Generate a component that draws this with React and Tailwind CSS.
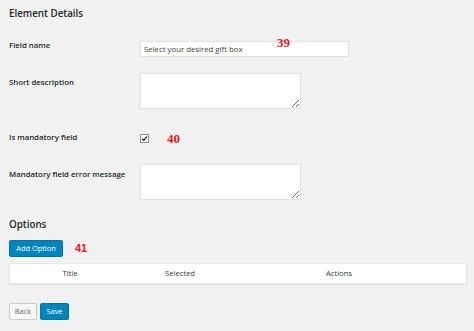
import React, { useState } from 'react';

const Marker = ({ children, className }) => (
  <span
    className={`text-[#e8141b] font-bold text-[13px] leading-none ${className}`}
    style={{ fontFamily: '"Liberation Serif", serif' }}
  >
    {children}
  </span>
);

function App() {
  const [fieldName, setFieldName] = useState('Select your desired gift box');
  const [mandatory, setMandatory] = useState(true);

  return (
    <div
      className="w-[474px] h-[331px] bg-[#f1f1f1] text-[#23282d] overflow-hidden"
      style={{ fontFamily: '"Open Sans", "Noto Sans", sans-serif' }}
    >
      <div className="px-[9px] pt-[6px]">
        <h2 className="text-[9.8px] font-semibold leading-[16px]">Element Details</h2>

        <div className="mt-[15px] flex items-center h-[17px]">
          <label className="w-[131px] text-[7.8px] font-semibold">Field name</label>
          <div className="relative">
            <input
              value={fieldName}
              onChange={(e) => setFieldName(e.target.value)}
              className="w-[209px] h-[16px] bg-white border border-[#e0e0e0] px-[3px] text-[7.8px] text-[#444] outline-none"
            />
            <Marker className="absolute left-[137px] top-[2px]">39</Marker>
          </div>
        </div>

        <div className="mt-[19px] flex items-start">
          <label className="w-[131px] text-[7.8px] font-semibold mt-[4px]">Short description</label>
          <textarea className="w-[161px] h-[36px] bg-white border border-[#e0e0e0] resize-y outline-none text-[8px] p-[2px]" />
        </div>

        <div className="mt-[24px] flex items-center h-[10px]">
          <label className="w-[131px] text-[7.8px] font-semibold">Is mandatory field</label>
          <button
            onClick={() => setMandatory(!mandatory)}
            className="w-[9px] h-[9px] bg-white border border-[#8c8f94] flex items-center justify-center"
          >
            {mandatory && (
              <svg viewBox="0 0 10 10" className="w-[7px] h-[7px]">
                <path d="M1.5 5.2 L4 7.6 L8.6 2" fill="none" stroke="#1e1e1e" strokeWidth="1.8" />
              </svg>
            )}
          </button>
          <Marker className="ml-[18px]">40</Marker>
        </div>

        <div className="mt-[21px] flex items-start">
          <label className="w-[131px] text-[7.8px] font-semibold mt-[5px]">Mandatory field error message</label>
          <textarea className="w-[161px] h-[36px] bg-white border border-[#e0e0e0] resize-y outline-none text-[8px] p-[2px]" />
        </div>

        <h2 className="mt-[17px] text-[9.8px] font-semibold leading-[16px]">Options</h2>

        <div className="mt-[7px] flex items-center">
          <button className="w-[54px] h-[17px] bg-[#0085ba] border border-[#0073aa] rounded-[2px] text-white text-[7.4px] leading-none">
            Add Option
          </button>
          <span
            className="ml-[12px] text-[#e8141b] font-bold text-[11px] leading-none"
            style={{ fontFamily: '"Liberation Sans", sans-serif' }}
          >
            41
          </span>
        </div>

        <div className="mt-[6px] w-[458px] h-[21px] bg-white shadow-[0_1px_1px_rgba(0,0,0,0.06)] border border-[#e8e8e8] grid grid-cols-[120px_100px_218px] items-center text-[7.6px] text-[#32373c]">
          <span className="text-center">Title</span>
          <span className="text-center">Selected</span>
          <span className="text-center">Actions</span>
        </div>

        <div className="mt-[19px] flex gap-[3px]">
          <button className="w-[28px] h-[17px] bg-[#f7f7f7] border border-[#cccccc] rounded-[2px] text-[#666] text-[7.4px] leading-none">
            Back
          </button>
          <button className="w-[29px] h-[17px] bg-[#0085ba] border border-[#0073aa] rounded-[2px] text-white text-[7.4px] leading-none">
            Save
          </button>
        </div>
      </div>
    </div>
  );
}

export default App;
